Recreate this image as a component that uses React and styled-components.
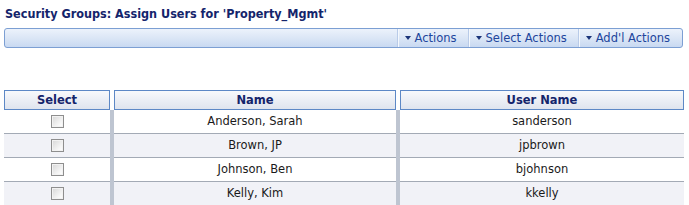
import React from "react";
import styled, { createGlobalStyle } from "styled-components";

const Global = createGlobalStyle`
  html, body { margin: 0; padding: 0; background: #ffffff; }
  body { font-family: "DejaVu Sans", Verdana, sans-serif; }
`;

const Page = styled.div`
  width: 689px;
  height: 205px;
  overflow: hidden;
  padding: 0 6px 0 4px;
  box-sizing: border-box;
`;

const Title = styled.h1`
  margin: 0;
  padding: 6px 0 0 1px;
  height: 28px;
  box-sizing: border-box;
  font-family: "DejaVu Sans Condensed", "DejaVu Sans", sans-serif;
  font-size: 12.5px;
  line-height: 16px;
  font-weight: bold;
  color: #14246b;
  white-space: nowrap;
`;

const Toolbar = styled.div`
  height: 20px;
  box-sizing: border-box;
  border: 1px solid #7c9fd3;
  border-radius: 3px;
  background: linear-gradient(#ecf2fb, #dbe6f6 50%, #c8d9f1);
  display: flex;
  justify-content: flex-end;
  align-items: stretch;
`;

const ActionButton = styled.div`
  display: flex;
  align-items: center;
  gap: 3px;
  padding: 0 ${(p) => p.$pr}px 0 7px;
  border-left: 1px solid #b9cbe8;
  box-shadow: inset 1px 0 0 #f4f8fd;
  font-size: 11.5px;
  color: #21459c;
  white-space: nowrap;
`;

const Arrow = styled.span`
  display: inline-block;
  width: 0;
  height: 0;
  border-left: 3.5px solid transparent;
  border-right: 3.5px solid transparent;
  border-top: 4px solid #1b3479;
  margin-right: 1px;
`;

const Table = styled.div`
  margin-top: 42px;
  display: grid;
  grid-template-columns: 106px 4px 282px 4px 284px;
`;

const HeadCell = styled.div`
  height: 20px;
  box-sizing: border-box;
  border: 1px solid #5d88c6;
  background: linear-gradient(#f8f9fc, #dfe4ee);
  font-size: 11.5px;
  font-weight: bold;
  color: #14246b;
  display: flex;
  align-items: center;
  justify-content: center;
`;

const HeadGap = styled.div``;

const Bar = styled.div`
  background: #bec5d1;
`;

const Cell = styled.div`
  height: 24px;
  box-sizing: border-box;
  border-bottom: 1px solid #a3aab5;
  background: ${(p) => (p.$alt ? "#f1f2f7" : "#ffffff")};
  font-size: 11.5px;
  color: #1a1a1a;
  display: flex;
  align-items: center;
  justify-content: center;
  padding-bottom: 1px;
`;

const Check = styled.span`
  display: inline-block;
  width: 13px;
  height: 13px;
  box-sizing: border-box;
  border: 1px solid #8e8e8e;
  box-shadow: inset 0 0 0 1px #f2f2f2;
  background: linear-gradient(135deg, #d6d6d6, #f6f6f6 70%, #ffffff);
  margin-left: 1px;
`;

const users = [
  ["Anderson, Sarah", "sanderson"],
  ["Brown, JP", "jpbrown"],
  ["Johnson, Ben", "bjohnson"],
  ["Kelly, Kim", "kkelly"],
];

export default function App() {
  return (
    <Page>
      <Global />
      <Title>Security Groups: Assign Users for 'Property_Mgmt'</Title>
      <Toolbar>
        <ActionButton $pr={11}><Arrow />Actions</ActionButton>
        <ActionButton $pr={11}><Arrow />Select Actions</ActionButton>
        <ActionButton $pr={12}><Arrow />Add'l Actions</ActionButton>
      </Toolbar>
      <Table>
        <HeadCell>Select</HeadCell>
        <HeadGap />
        <HeadCell>Name</HeadCell>
        <HeadGap />
        <HeadCell>User Name</HeadCell>
        {users.map(([name, user], i) => (
          <React.Fragment key={user}>
            <Cell $alt={i % 2 === 1}><Check /></Cell>
            <Bar />
            <Cell $alt={i % 2 === 1}>{name}</Cell>
            <Bar />
            <Cell $alt={i % 2 === 1}>{user}</Cell>
          </React.Fragment>
        ))}
      </Table>
    </Page>
  );
}
